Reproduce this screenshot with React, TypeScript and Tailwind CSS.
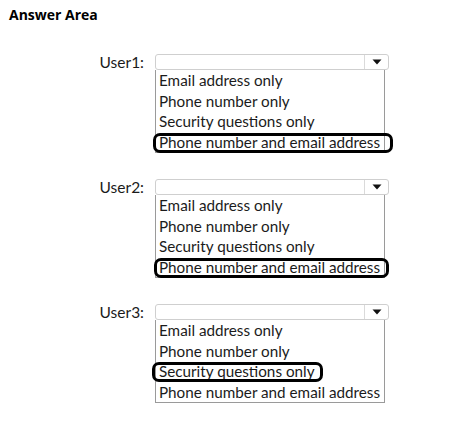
import React from "react";

interface Highlight {
  row: number;
  className: string;
}

interface Group {
  label: string;
  highlight: Highlight;
}

const OPTIONS = [
  "Email address only",
  "Phone number only",
  "Security questions only",
  "Phone number and email address",
];

const GROUPS: Group[] = [
  { label: "User1:", highlight: { row: 3, className: "-left-[3px] w-[240px]" } },
  { label: "User2:", highlight: { row: 3, className: "-left-[2px] w-[235px]" } },
  { label: "User3:", highlight: { row: 2, className: "-left-[4px] w-[171px]" } },
];

const DropDown: React.FC<Group> = ({ label, highlight }) => (
  <div className="flex">
    <div className="w-[145px] pr-[1px] text-right text-[15.5px] leading-[16px]">{label}</div>
    <div className="ml-[10px]">
      <div className="flex h-[16px] w-[234px] rounded-[3px] border border-[#cfcfcf] bg-white">
        <div className="flex-1" />
        <div className="flex w-[24px] items-center justify-center border-l border-[#dadada]">
          <svg width="10" height="6" viewBox="0 0 10 6">
            <path d="M0.5 0.5 L9.5 0.5 L5 5.5 Z" fill="#111" />
          </svg>
        </div>
      </div>
      <div className="w-[230px] border border-t-0 border-[#9a9a9a] bg-white">
        {OPTIONS.map((opt, i) => (
          <div key={i} className="relative h-[20.5px] pl-[3px] text-[15.25px] leading-[20px] whitespace-nowrap">
            {opt}
            {highlight.row === i && (
              <div
                className={`absolute top-[1px] h-[20px] rounded-[7px] border-[3px] border-black ${highlight.className}`}
              />
            )}
          </div>
        ))}
      </div>
    </div>
  </div>
);

export default function App() {
  return (
    <div
      className="relative h-[440px] w-[474px] bg-white text-[#1b1b1b]"
      style={{ fontFamily: 'Lato, "Open Sans", sans-serif' }}
    >
      <div
        className="pl-[9px] pt-[6px] text-[14px] font-bold leading-[18px] text-black"
        style={{ fontFamily: '"Open Sans", sans-serif' }}
      >
        Answer Area
      </div>
      <div className="mt-[30px] flex flex-col gap-[26px]">
        {GROUPS.map((g) => (
          <DropDown key={g.label} {...g} />
        ))}
      </div>
    </div>
  );
}
